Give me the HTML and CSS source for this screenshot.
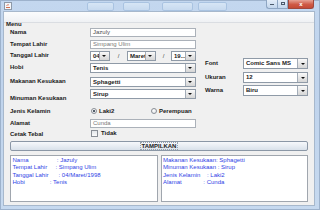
FILE: index.html
```html
<!DOCTYPE html>
<html>
<head>
<meta charset="utf-8">
<link rel="stylesheet" href="styles.css">
</head>
<body>
<div class="win">
  <div class="titlebar">
    <span class="appicon"><svg width="8" height="8" viewBox="0 0 8 8"><rect x="0.5" y="0.5" width="7" height="7" fill="#f4f6f9" stroke="#8d99a8"/><path d="M2 5.5h4M2.5 3.5c0.8-1 1.6 0 2.4-1" stroke="#d0603a" stroke-width="0.9" fill="none"/></svg></span>
    <div class="tabs"><span class="tab t1"></span><span class="tab t2"></span><span class="tab t3"></span><span class="tab t4"></span></div>
    <div class="controls">
      <span class="ctl min"><i></i></span>
      <span class="ctl max"><i></i></span>
      <span class="ctl close">x</span>
    </div>
  </div>
  <div class="frame">
    <div class="menubar"><span class="menu">Menu</span></div>
    <div class="content">
      <div class="form">
        <div class="left">
          <div class="lbl">Nama</div>
          <div class="tf dark">Jazuly</div>

          <div class="lbl">Tempat Lahir</div>
          <div class="tf">Simpang Ulim</div>

          <div class="lbl">Tanggal Lahir</div>
          <div class="date">
            <div class="cb w20"><span class="v">04</span><span class="arr"></span></div>
            <span class="slash s1">/</span>
            <div class="cb w29"><span class="v">Maret</span><span class="arr"></span></div>
            <span class="slash s2">/</span>
            <div class="cb w25"><span class="v">19...</span><span class="arr"></span></div>
          </div>

          <div class="lbl">Hobi</div>
          <div class="cb"><span class="v">Tenis</span><span class="arr"></span></div>

          <div class="lbl">Makanan Kesukaan</div>
          <div class="cb"><span class="v">Sphagetti</span><span class="arr"></span></div>

          <div class="lbl low">Minuman Kesukaan</div>
          <div class="cb"><span class="v">Sirup</span><span class="arr"></span></div>

          <div class="lbl tall">Jenis Kelamin</div>
          <div class="radios">
            <span class="opt opt1"><span class="radio on"></span><span class="otext">Laki2</span></span>
            <span class="opt"><span class="radio"></span><span class="otext">Perempuan</span></span>
          </div>

          <div class="lbl">Alamat</div>
          <div class="tf">Cunda</div>

          <div class="lbl">Cetak Tebal</div>
          <div class="checkrow"><span class="check"></span><span class="otext">Tidak</span></div>
        </div>
        <div class="side">
          <div class="lbl">Font</div>
          <div class="cb big"><span class="v">Comic Sans MS</span><span class="arr"></span></div>
          <div class="lbl">Ukuran</div>
          <div class="cb big"><span class="v">12</span><span class="arr"></span></div>
          <div class="lbl">Warna</div>
          <div class="cb big"><span class="v">Biru</span><span class="arr"></span></div>
        </div>
      </div>
      <button class="btn"><span class="focus">TAMPILKAN</span></button>
      <div class="outs">
        <div class="ta">Nama                 : Jazuly
Tempat Lahir     : Simpang Ulim
Tanggal Lahir      : 04/Maret/1998
Hobi               : Tenis</div>
        <div class="ta">Makanan Kesukaan: Sphagetti
Minuman Kesukaan : Sirup
Jenis Kelamin    : Laki2
Alamat             : Cunda</div>
      </div>
    </div>
  </div>
</div>
</body>
</html>
```

FILE: styles.css
```css
html, body {
  margin: 0;
  padding: 0;
}
body {
  width: 320px;
  height: 210px;
  overflow: hidden;
  font-family: "Liberation Sans", Arial, sans-serif;
  color: #1e1e1e;
}
.win {
  width: 320px;
  height: 210px;
  display: flex;
  flex-direction: column;
  background: linear-gradient(#c3d7ef, #bfd3ec 40%, #c6d9ef);
  box-shadow: inset 0 0 0 1px #9db2cc;
}
.titlebar {
  height: 12px;
  display: flex;
  align-items: flex-start;
  flex: none;
}
.appicon {
  display: block;
  width: 8px;
  height: 8px;
  margin: 2px 0 0 4px;
}
.appicon svg { display: block; }
.tabs {
  display: flex;
  margin: 2px 0 0 75px;
  filter: blur(0.6px);
}
.tab {
  display: block;
  height: 7px;
  border: 1px solid #a9c3e1;
  border-radius: 2px;
  background: linear-gradient(#d6e5f5, #c7daef);
}
.t1 { width: 25px; }
.t2 { width: 25px; margin-left: 9px; }
.t3 { width: 29px; margin-left: 12px; }
.t4 { width: 27px; margin-left: 5px; }
.controls {
  margin-left: auto;
  margin-right: 6px;
  display: flex;
}
.ctl {
  display: block;
  height: 9px;
  box-sizing: border-box;
  position: relative;
}
.min, .max {
  width: 11px;
  border: 1px solid #8ea6c3;
  border-top: none;
  background: linear-gradient(#e3edf8, #c3d6ec);
}
.min { border-radius: 0 0 0 3px; border-right: none; }
.min i {
  position: absolute;
  left: 3px;
  top: 4px;
  width: 4px;
  height: 1px;
  background: #4b5a6c;
}
.max i {
  position: absolute;
  left: 3px;
  top: 2px;
  width: 4px;
  height: 3px;
  border: 1px solid #4b5a6c;
  border-top-width: 1.5px;
  box-sizing: border-box;
}
.close {
  width: 26px;
  border: 1px solid #a0473c;
  border-top: none;
  border-radius: 0 0 3px 0;
  background: linear-gradient(#e6a295, #cf5a46 55%, #c44a36);
  color: #fff;
  font: bold 6px/8px "Liberation Sans", Arial, sans-serif;
  text-align: center;
}
.frame {
  flex: none;
  margin: 0 6px 5px 4px;
  height: 193px;
  background: #f0f0f0;
  box-shadow: 0 0 0 1px #a7b8cc;
  display: flex;
  flex-direction: column;
}
.menubar {
  height: 10px;
  border-bottom: 1px solid #dadde2;
  background: linear-gradient(#fbfcfd, #eff1f4);
  padding-left: 2px;
}
.menu {
  font: bold 6px/10px "Liberation Sans", Arial, sans-serif;
  color: #222;
}
.content {
  padding: 5px 6px 3px 6px;
}
.form {
  display: flex;
  height: 113px;
}
.left {
  display: grid;
  grid-template-columns: 80px 106px;
  grid-template-rows: 11.5px 11.5px 12px 14px 12px 17px 13px 11px 11px;
  align-items: start;
}
.lbl {
  font: bold 6px/9px "Liberation Sans", Arial, sans-serif;
  color: #202020;
  white-space: nowrap;
}
.lbl.low { padding-top: 5px; }
.lbl.tall { line-height: 10px; }
.tf {
  height: 9px;
  box-sizing: border-box;
  border: 1px solid #abb1b9;
  background: #fff;
  font: 6px/7px "Liberation Sans", Arial, sans-serif;
  color: #7a7a7a;
  padding-left: 2px;
}
.tf.dark { color: #505050; }
.cb {
  height: 10px;
  box-sizing: border-box;
  display: flex;
  border: 1px solid #8f9aa7;
  background: #fff;
}
.cb .v {
  flex: 1;
  font: bold 6px/8px "Liberation Sans", Arial, sans-serif;
  color: #222;
  padding-left: 2px;
  white-space: nowrap;
  overflow: hidden;
}
.cb .arr {
  width: 9px;
  flex: none;
  border-left: 1px solid #a4adb8;
  background: linear-gradient(#fafafa, #e6e6e6 50%, #d6d6d6);
  position: relative;
}
.cb .arr::after {
  content: "";
  position: absolute;
  left: 2px;
  top: 3px;
  border-top: 2.5px solid #111;
  border-left: 2.5px solid transparent;
  border-right: 2.5px solid transparent;
}
.cb.big { height: 11px; }
.cb.big .v { line-height: 9px; }
.cb.big .arr::after { top: 3.5px; left: 2.5px; }
.date {
  display: flex;
  align-items: flex-start;
}
.w20 { width: 20px; }
.w29 { width: 29px; }
.w25 { width: 25px; }
.slash {
  font: 6px/10px "Liberation Sans", Arial, sans-serif;
  color: #444;
  text-align: center;
}
.s1 { width: 17px; }
.s2 { width: 15px; }
.radios {
  display: flex;
  align-items: center;
  height: 10px;
  white-space: nowrap;
}
.opt {
  display: flex;
  align-items: center;
}
.opt1 { width: 60px; }
.radio {
  display: block;
  width: 6px;
  height: 6px;
  box-sizing: border-box;
  margin-left: 1px;
  border: 1px solid #8a8f96;
  border-radius: 50%;
  background: radial-gradient(circle at 40% 35%, #ffffff, #dcdfe3);
  position: relative;
}
.radio.on::after {
  content: "";
  position: absolute;
  left: 1px;
  top: 1px;
  width: 2px;
  height: 2px;
  border-radius: 50%;
  background: #1c2a3a;
}
.otext {
  font: bold 6px/10px "Liberation Sans", Arial, sans-serif;
  color: #202020;
  margin-left: 2px;
}
.checkrow {
  display: flex;
  align-items: flex-start;
}
.check {
  display: block;
  width: 7px;
  height: 7px;
  box-sizing: border-box;
  margin-left: 1px;
  border: 1px solid #8a8f96;
  background: linear-gradient(#e4e7ea, #fbfbfb);
}
.checkrow .otext {
  line-height: 7px;
  margin-left: 3px;
}
.side {
  display: grid;
  grid-template-columns: 38px 65px;
  grid-template-rows: 14px 13px 11px;
  align-content: start;
  align-items: center;
  padding: 30px 0 0 9px;
  height: 38px;
}
.side .lbl { align-self: start; line-height: 11px; }
.side .cb { align-self: start; }
.btn {
  display: block;
  width: 298px;
  height: 10px;
  margin: 0;
  padding: 0;
  box-sizing: border-box;
  border: 1px solid #8b97a6;
  border-radius: 2px;
  background: linear-gradient(#f6f8fb, #e8edf3 50%, #d9e1ea);
  font: bold 6px/8px "Liberation Sans", Arial, sans-serif;
  color: #1c1c1c;
  text-align: center;
}
.focus {
  display: inline-block;
  outline: 1px dotted #9aa3ad;
  line-height: 6px;
  padding: 0 1px;
}
.outs {
  display: grid;
  grid-template-columns: 1fr 1fr;
  column-gap: 3px;
  margin-top: 4px;
  height: 47px;
}
.ta {
  box-sizing: border-box;
  border: 1px solid #a0a6ae;
  background: #fff;
  padding: 1px 1px 0 1.5px;
  font: 6px/7.3px "Liberation Sans", Arial, sans-serif;
  color: #2f3fe6;
  white-space: pre;
  overflow: hidden;
}
```
